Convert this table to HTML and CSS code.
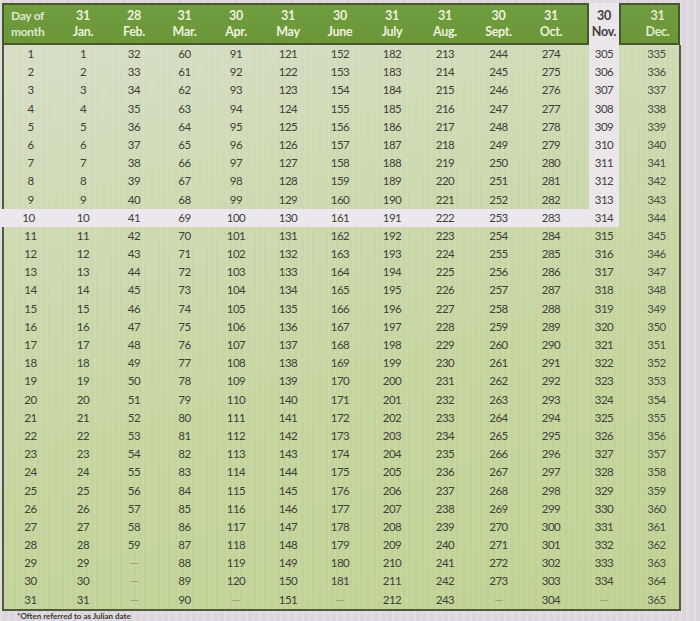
FILE: index.html
```html
<!DOCTYPE html>
<html>
<head>
<meta charset="utf-8">
<link rel="stylesheet" href="styles.css">
</head>
<body>
<div class="sheet">
  <div class="head">
    <div class="hc day">Day of<br>month</div>
    <div class="hc">31<br>Jan.</div>
    <div class="hc">28<br>Feb.</div>
    <div class="hc">31<br>Mar.</div>
    <div class="hc">30<br>Apr.</div>
    <div class="hc">31<br>May</div>
    <div class="hc">30<br>June</div>
    <div class="hc">31<br>July</div>
    <div class="hc">31<br>Aug.</div>
    <div class="hc">30<br>Sept.</div>
    <div class="hc oct">31<br>Oct.</div>
    <div class="hc nov">30<br>Nov.</div>
    <div class="hc dec">31<br>Dec.</div>
  </div>
  <div class="body">
    <div class="row top"><span>1</span><span>1</span><span>32</span><span>60</span><span>91</span><span>121</span><span>152</span><span>182</span><span>213</span><span>244</span><span class="oct">274</span><span class="nov">305</span><span class="dec">335</span></div>
    <div class="row top"><span>2</span><span>2</span><span>33</span><span>61</span><span>92</span><span>122</span><span>153</span><span>183</span><span>214</span><span>245</span><span class="oct">275</span><span class="nov">306</span><span class="dec">336</span></div>
    <div class="row top"><span>3</span><span>3</span><span>34</span><span>62</span><span>93</span><span>123</span><span>154</span><span>184</span><span>215</span><span>246</span><span class="oct">276</span><span class="nov">307</span><span class="dec">337</span></div>
    <div class="row top"><span>4</span><span>4</span><span>35</span><span>63</span><span>94</span><span>124</span><span>155</span><span>185</span><span>216</span><span>247</span><span class="oct">277</span><span class="nov">308</span><span class="dec">338</span></div>
    <div class="row top"><span>5</span><span>5</span><span>36</span><span>64</span><span>95</span><span>125</span><span>156</span><span>186</span><span>217</span><span>248</span><span class="oct">278</span><span class="nov">309</span><span class="dec">339</span></div>
    <div class="row top"><span>6</span><span>6</span><span>37</span><span>65</span><span>96</span><span>126</span><span>157</span><span>187</span><span>218</span><span>249</span><span class="oct">279</span><span class="nov">310</span><span class="dec">340</span></div>
    <div class="row top"><span>7</span><span>7</span><span>38</span><span>66</span><span>97</span><span>127</span><span>158</span><span>188</span><span>219</span><span>250</span><span class="oct">280</span><span class="nov">311</span><span class="dec">341</span></div>
    <div class="row top"><span>8</span><span>8</span><span>39</span><span>67</span><span>98</span><span>128</span><span>159</span><span>189</span><span>220</span><span>251</span><span class="oct">281</span><span class="nov">312</span><span class="dec">342</span></div>
    <div class="row top"><span>9</span><span>9</span><span>40</span><span>68</span><span>99</span><span>129</span><span>160</span><span>190</span><span>221</span><span>252</span><span class="oct">282</span><span class="nov">313</span><span class="dec">343</span></div>
    <div class="row top hl"><span class="first">10</span><span>10</span><span>41</span><span>69</span><span>100</span><span>130</span><span>161</span><span>191</span><span>222</span><span>253</span><span class="oct">283</span><span class="nov">314</span><span class="dec">344</span></div>
    <div class="row"><span>11</span><span>11</span><span>42</span><span>70</span><span>101</span><span>131</span><span>162</span><span>192</span><span>223</span><span>254</span><span class="oct">284</span><span class="nov">315</span><span class="dec">345</span></div>
    <div class="row"><span>12</span><span>12</span><span>43</span><span>71</span><span>102</span><span>132</span><span>163</span><span>193</span><span>224</span><span>255</span><span class="oct">285</span><span class="nov">316</span><span class="dec">346</span></div>
    <div class="row"><span>13</span><span>13</span><span>44</span><span>72</span><span>103</span><span>133</span><span>164</span><span>194</span><span>225</span><span>256</span><span class="oct">286</span><span class="nov">317</span><span class="dec">347</span></div>
    <div class="row"><span>14</span><span>14</span><span>45</span><span>73</span><span>104</span><span>134</span><span>165</span><span>195</span><span>226</span><span>257</span><span class="oct">287</span><span class="nov">318</span><span class="dec">348</span></div>
    <div class="row"><span>15</span><span>15</span><span>46</span><span>74</span><span>105</span><span>135</span><span>166</span><span>196</span><span>227</span><span>258</span><span class="oct">288</span><span class="nov">319</span><span class="dec">349</span></div>
    <div class="row"><span>16</span><span>16</span><span>47</span><span>75</span><span>106</span><span>136</span><span>167</span><span>197</span><span>228</span><span>259</span><span class="oct">289</span><span class="nov">320</span><span class="dec">350</span></div>
    <div class="row"><span>17</span><span>17</span><span>48</span><span>76</span><span>107</span><span>137</span><span>168</span><span>198</span><span>229</span><span>260</span><span class="oct">290</span><span class="nov">321</span><span class="dec">351</span></div>
    <div class="row"><span>18</span><span>18</span><span>49</span><span>77</span><span>108</span><span>138</span><span>169</span><span>199</span><span>230</span><span>261</span><span class="oct">291</span><span class="nov">322</span><span class="dec">352</span></div>
    <div class="row"><span>19</span><span>19</span><span>50</span><span>78</span><span>109</span><span>139</span><span>170</span><span>200</span><span>231</span><span>262</span><span class="oct">292</span><span class="nov">323</span><span class="dec">353</span></div>
    <div class="row"><span>20</span><span>20</span><span>51</span><span>79</span><span>110</span><span>140</span><span>171</span><span>201</span><span>232</span><span>263</span><span class="oct">293</span><span class="nov">324</span><span class="dec">354</span></div>
    <div class="row"><span>21</span><span>21</span><span>52</span><span>80</span><span>111</span><span>141</span><span>172</span><span>202</span><span>233</span><span>264</span><span class="oct">294</span><span class="nov">325</span><span class="dec">355</span></div>
    <div class="row"><span>22</span><span>22</span><span>53</span><span>81</span><span>112</span><span>142</span><span>173</span><span>203</span><span>234</span><span>265</span><span class="oct">295</span><span class="nov">326</span><span class="dec">356</span></div>
    <div class="row"><span>23</span><span>23</span><span>54</span><span>82</span><span>113</span><span>143</span><span>174</span><span>204</span><span>235</span><span>266</span><span class="oct">296</span><span class="nov">327</span><span class="dec">357</span></div>
    <div class="row"><span>24</span><span>24</span><span>55</span><span>83</span><span>114</span><span>144</span><span>175</span><span>205</span><span>236</span><span>267</span><span class="oct">297</span><span class="nov">328</span><span class="dec">358</span></div>
    <div class="row"><span>25</span><span>25</span><span>56</span><span>84</span><span>115</span><span>145</span><span>176</span><span>206</span><span>237</span><span>268</span><span class="oct">298</span><span class="nov">329</span><span class="dec">359</span></div>
    <div class="row"><span>26</span><span>26</span><span>57</span><span>85</span><span>116</span><span>146</span><span>177</span><span>207</span><span>238</span><span>269</span><span class="oct">299</span><span class="nov">330</span><span class="dec">360</span></div>
    <div class="row"><span>27</span><span>27</span><span>58</span><span>86</span><span>117</span><span>147</span><span>178</span><span>208</span><span>239</span><span>270</span><span class="oct">300</span><span class="nov">331</span><span class="dec">361</span></div>
    <div class="row"><span>28</span><span>28</span><span>59</span><span>87</span><span>118</span><span>148</span><span>179</span><span>209</span><span>240</span><span>271</span><span class="oct">301</span><span class="nov">332</span><span class="dec">362</span></div>
    <div class="row"><span>29</span><span>29</span><span class="na">—</span><span>88</span><span>119</span><span>149</span><span>180</span><span>210</span><span>241</span><span>272</span><span class="oct">302</span><span class="nov">333</span><span class="dec">363</span></div>
    <div class="row"><span>30</span><span>30</span><span class="na">—</span><span>89</span><span>120</span><span>150</span><span>181</span><span>211</span><span>242</span><span>273</span><span class="oct">303</span><span class="nov">334</span><span class="dec">364</span></div>
    <div class="row"><span>31</span><span>31</span><span class="na">—</span><span>90</span><span class="na">—</span><span>151</span><span class="na">—</span><span>212</span><span>243</span><span class="na">—</span><span class="oct">304</span><span class="nov na">—</span><span class="dec">365</span></div>
  </div>
  <p class="note">*Often referred to as Julian date</p>
</div>
</body>
</html>
```

FILE: styles.css
```css
html, body {
  margin: 0;
  padding: 0;
  overflow: hidden;
}
body {
  width: 700px;
  height: 621px;
  background:
    repeating-linear-gradient(90deg, rgba(255,255,255,0.16) 0 3px, rgba(255,255,255,0) 3px 7px),
    #ddd5dc;
  font-family: "Lato", "Open Sans", sans-serif;
  color: #3f4039;
}
.sheet {
  padding: 3px 0 0 2px;
}
.head {
  display: grid;
  grid-template-columns: 55px 52px 50px 51px 52px 52px 52px 52px 54px 53px 64px 30px 61px;
  height: 42px;
}
.hc {
  box-sizing: border-box;
  background: linear-gradient(180deg, #6f9c3e 0%, #6b9739 100%);
  border-top: 2px solid #48572f;
  border-bottom: 2px solid #48572f;
  color: #eef0dc;
  font-weight: 700;
  font-size: 12.5px;
  line-height: 16px;
  letter-spacing: -0.3px;
  text-align: center;
  display: flex;
  flex-direction: column;
  justify-content: center;
}
.hc.day {
  border-left: 2px solid #48572f;
  text-align: left;
  padding-left: 7px;
  font-size: 12px;
  color: #e1e6cc;
}
.hc.oct {
  border-right: 2px solid #48572f;
  padding-right: 10px;
}
.hc.nov {
  background: #ece6ec;
  border: none;
  color: #3f403b;
}
.hc.dec {
  border: 2px solid #48572f;
  padding-left: 16px;
  color: #e4e8d0;
}
.body {
  border-left: 2px solid #4e5b3a;
  border-right: 2px solid #4e5b3a;
  border-bottom: 2px solid #4e5b3a;
  width: 675px;
  background:
    repeating-linear-gradient(90deg, rgba(255,255,255,0.07) 0 2px, rgba(255,255,255,0) 2px 6px),
    linear-gradient(165deg, #d7dec6 0%, #cdd9b0 30%, #c5d59e 60%, #bfd293 100%);
}
.row {
  display: grid;
  grid-template-columns: 53px 52px 50px 51px 52px 52px 52px 52px 54px 53px 64px 30px 59px;
  height: 18.2px;
  font-size: 11.5px;
  letter-spacing: -0.5px;
}
.row span {
  text-align: center;
  line-height: 18.2px;
}
.row .oct {
  padding-right: 12px;
}
.row .dec {
  padding-left: 16px;
  color: #4b4d45;
}
.row.top .nov {
  background: #ebe6e9;
}
.row.hl span {
  background: #ece7ec;
}
.row.hl span.dec {
  background: transparent;
}
.row.hl .first {
  margin-left: -4px;
  padding-right: 0;
}
.row .na {
  color: #8e9a78;
}
.note {
  margin: 1px 0 0 15px;
  font-size: 8px;
  line-height: 8px;
  font-weight: 700;
  color: #3a3a36;
}
```
